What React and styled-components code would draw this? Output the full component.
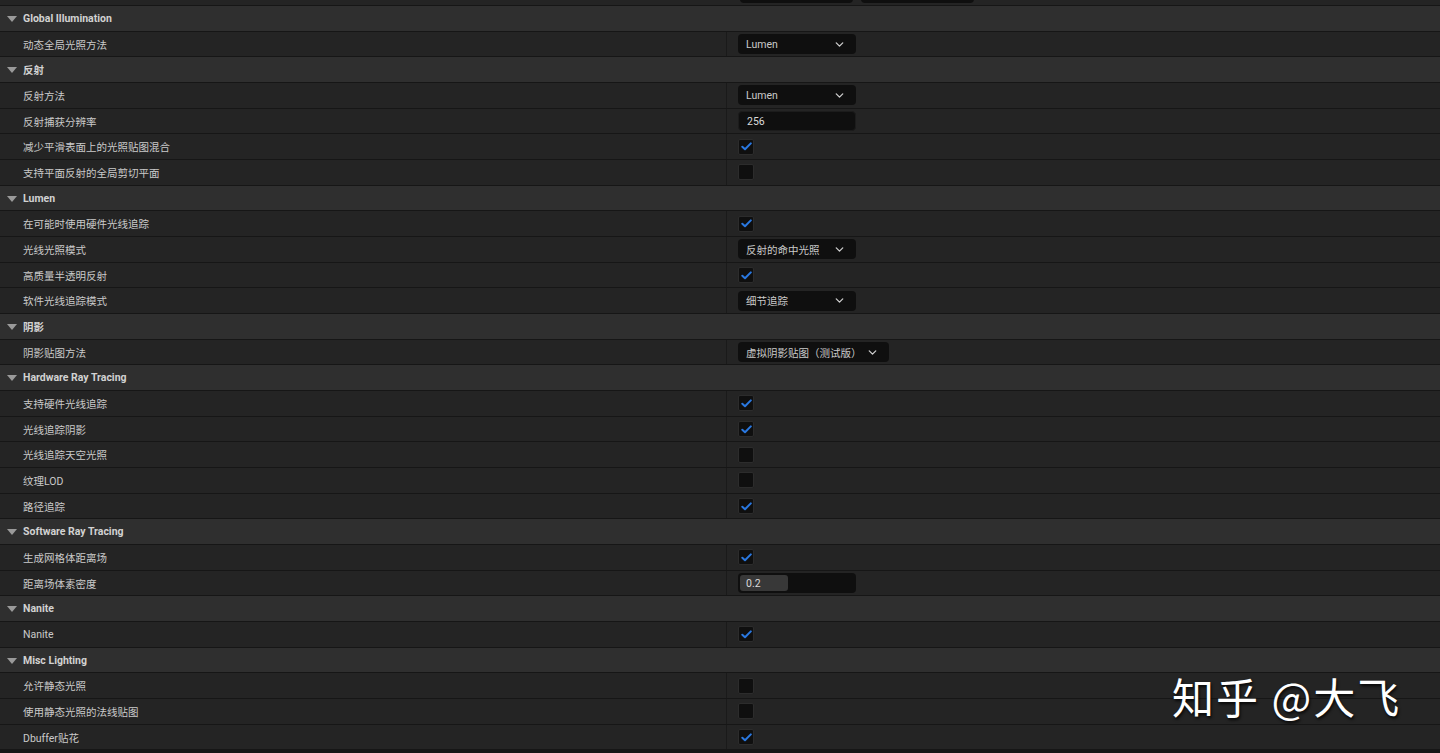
import React from 'react'
import styled, { createGlobalStyle } from 'styled-components'
import { ChevronDown } from 'lucide-react'

const GlobalStyle = createGlobalStyle`
  html, body { margin: 0; padding: 0; background: #171717; }
  body {
    font-family: Roboto, "Noto Sans CJK SC", "Noto Sans", sans-serif;
    color: #c4c4c4;
    overflow: hidden;
  }
`

const Page = styled.div`
  position: relative;
  width: 1440px;
  height: 753px;
  overflow: hidden;
  display: flex;
  flex-direction: column;
  gap: 1px;
  background: #161616;
`

const CutRow = styled.div`
  height: 5px;
  flex: none;
  background: #242424;
  display: flex;
  align-items: flex-end;
  padding-left: 740px;
  gap: 8px;
  overflow: hidden;
  padding-bottom: 2px;
  box-sizing: border-box;
`

const CutBox = styled.div`
  width: 113px;
  height: 20px;
  flex: none;
  background: #0f0f0f;
  border-radius: 0 0 4px 4px;
`

const HeaderRow = styled.div`
  height: 24.68px;
  flex: none;
  background: #2f2f2f;
  display: flex;
  align-items: center;
  padding-left: 7px;
  gap: 6px;
  font-weight: 700;
  font-size: 10.5px;
  color: #d2d2d2;
`

const Arrow = styled.span`
  width: 0;
  height: 0;
  border-left: 5px solid transparent;
  border-right: 5px solid transparent;
  border-top: 6px solid #9a9a9a;
  margin-top: 1px;
`

const PropRow = styled.div`
  height: 24.68px;
  flex: none;
  background: #242424;
  display: grid;
  grid-template-columns: 726px 1px 1fr;
  align-items: stretch;
  font-size: 10.5px;
`

const Label = styled.div`
  display: flex;
  align-items: center;
  padding-left: 23px;
  color: #cacaca;
`

const Divider = styled.div`
  background: #1a1a1a;
`

const Value = styled.div`
  display: flex;
  align-items: center;
  padding-left: 11px;
`

const Combo = styled.div`
  box-sizing: border-box;
  height: 20px;
  min-width: 118px;
  display: inline-flex;
  align-items: center;
  justify-content: space-between;
  gap: 4px;
  padding: 0 10px 0 8px;
  background: #0f0f0f;
  border-radius: 4px;
  color: #cacaca;
  font-size: 10.5px;
  svg { flex: none; color: #cfcfcf; }
`

const NumberBox = styled.div`
  box-sizing: border-box;
  height: 20px;
  width: 118px;
  display: flex;
  align-items: center;
  padding-left: 8px;
  background: #0f0f0f;
  border: 1px solid #1c1c1c;
  border-radius: 4px;
  color: #dadada;
  font-size: 10.5px;
`

const SliderBox = styled.div`
  box-sizing: border-box;
  height: 20px;
  width: 118px;
  padding: 2px;
  background: #0f0f0f;
  border-radius: 4px;
  display: flex;
`

const SliderFill = styled.div`
  height: 100%;
  background: #383838;
  border-radius: 3px;
  display: flex;
  align-items: center;
  padding-left: 6px;
  box-sizing: border-box;
  color: #dadada;
  font-size: 10.5px;
`

const Check = styled.div`
  box-sizing: border-box;
  width: 16px;
  height: 16px;
  background: #0f0f0f;
  border: 1px solid #2c2c2c;
  border-radius: 2px;
  display: flex;
  align-items: center;
  justify-content: center;
`

const Watermark = styled.div`
  position: absolute;
  left: 1172px;
  top: 665px;
  font-family: "Noto Sans CJK SC", sans-serif;
  font-size: 42px;
  font-weight: 400;
  color: #ffffff;
  letter-spacing: 2px;
  text-shadow: 1px 2px 3px rgba(0, 0, 0, 0.85);
  white-space: nowrap;
`

const CheckBox = ({ on }) => (
  <Check>
    {on && (
      <svg width="11" height="9" viewBox="0 0 11 9">
        <path d="M1.3 4.8 L4 7.3 L9.8 1.4" fill="none" stroke="#2a78e0" strokeWidth="2" strokeLinecap="round" strokeLinejoin="round" />
      </svg>
    )}
  </Check>
)

const renderValue = v => {
  if (v.type === 'combo') return <Combo>{v.text}<ChevronDown size={13} strokeWidth={2.4} /></Combo>
  if (v.type === 'num') return <NumberBox>{v.text}</NumberBox>
  if (v.type === 'slider') return <SliderBox><SliderFill style={{ width: v.fill }}>{v.text}</SliderFill></SliderBox>
  return <CheckBox on={v.on} />
}

const on = { type: 'check', on: true }
const off = { type: 'check', on: false }
const combo = text => ({ type: 'combo', text })

const sections = [
  { title: 'Global Illumination', rows: [['动态全局光照方法', combo('Lumen')]] },
  { title: '反射', rows: [
    ['反射方法', combo('Lumen')],
    ['反射捕获分辨率', { type: 'num', text: '256' }],
    ['减少平滑表面上的光照贴图混合', on],
    ['支持平面反射的全局剪切平面', off],
  ] },
  { title: 'Lumen', rows: [
    ['在可能时使用硬件光线追踪', on],
    ['光线光照模式', combo('反射的命中光照')],
    ['高质量半透明反射', on],
    ['软件光线追踪模式', combo('细节追踪')],
  ] },
  { title: '阴影', rows: [['阴影贴图方法', combo('虚拟阴影贴图（测试版）')]] },
  { title: 'Hardware Ray Tracing', rows: [
    ['支持硬件光线追踪', on],
    ['光线追踪阴影', on],
    ['光线追踪天空光照', off],
    ['纹理LOD', off],
    ['路径追踪', on],
  ] },
  { title: 'Software Ray Tracing', rows: [
    ['生成网格体距离场', on],
    ['距离场体素密度', { type: 'slider', text: '0.2', fill: 48 }],
  ] },
  { title: 'Nanite', rows: [['Nanite', on]] },
  { title: 'Misc Lighting', rows: [
    ['允许静态光照', off],
    ['使用静态光照的法线贴图', off],
    ['Dbuffer贴花', on],
  ] },
]

export default function App() {
  return <>
    <GlobalStyle />
    <Page>
      <CutRow><CutBox /><CutBox /></CutRow>
      {sections.map(s => (
        <React.Fragment key={s.title}>
          <HeaderRow><Arrow />{s.title}</HeaderRow>
          {s.rows.map(([label, v]) => (
            <PropRow key={label}>
              <Label>{label}</Label>
              <Divider />
              <Value>{renderValue(v)}</Value>
            </PropRow>
          ))}
        </React.Fragment>
      ))}
      <Watermark>知乎 @大飞</Watermark>
    </Page>
  </>
}
